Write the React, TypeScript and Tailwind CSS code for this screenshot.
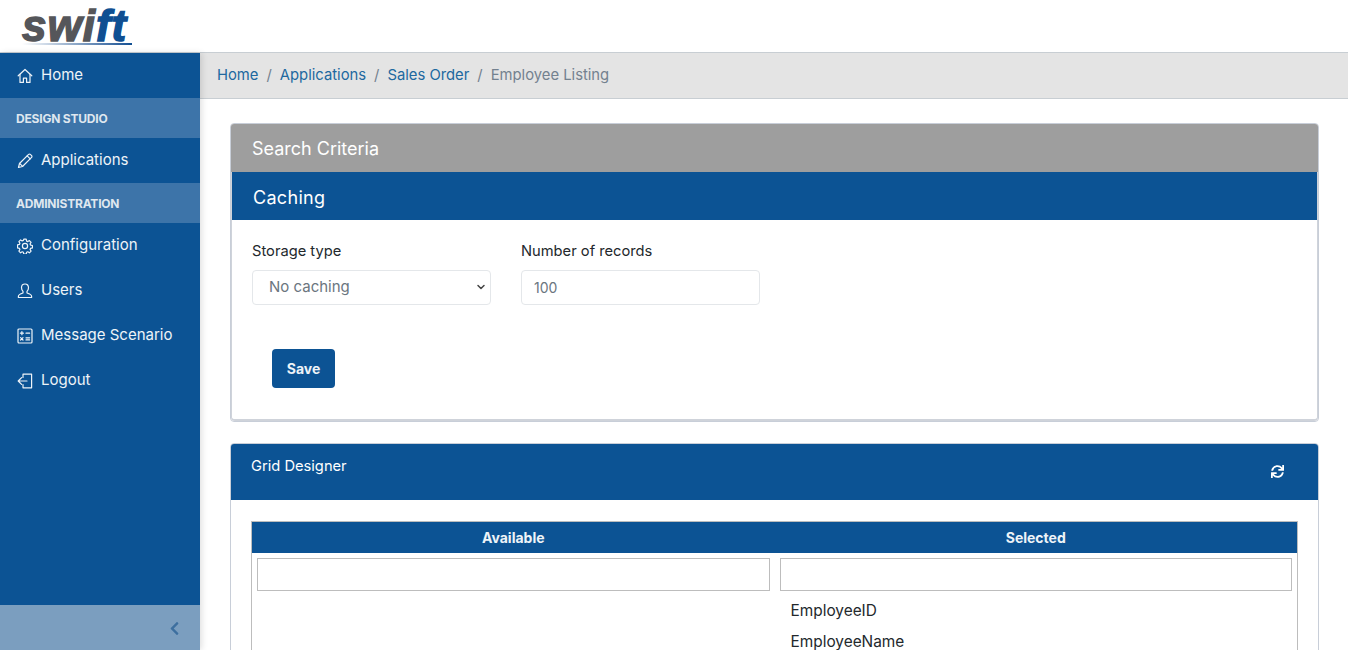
import { ChevronDown } from 'lucide-react';
import { FaChevronLeft, FaSync } from 'react-icons/fa';
import type { ReactNode } from 'react';

const FONT = "font-['Inter','Open_Sans',sans-serif]";

// ============================================================
// Sidebar icons
// ============================================================
function Icon({ children }: { children: ReactNode }) {
  return (
    <svg viewBox="0 0 16 16" fill="none" stroke="currentColor" strokeWidth="1.2" strokeLinecap="round" strokeLinejoin="round" className="h-4 w-4 shrink-0">
      {children}
    </svg>
  );
}

const HomeIcon = () => (
  <Icon>
    <path d="M1.2 7.8 8 1.5l6.8 6.3" />
    <path d="M3 6.4v8h3.4v-4.2h3.2v4.2H13v-8" />
  </Icon>
);
const PencilIcon = () => (
  <Icon>
    <path d="M1.5 14.5l1-4L11.6 1.4a1.2 1.2 0 0 1 1.7 0l1.3 1.3a1.2 1.2 0 0 1 0 1.7L5.5 13.5z" />
    <path d="M10.2 2.8l3 3M2.6 10.4l3 3" />
  </Icon>
);
const GearIcon = () => (
  <Icon>
    <path d="M6.8 1.2h2.4l.4 1.9 1.2.5 1.6-1 1.7 1.7-1 1.6.5 1.2 1.9.4v2.4l-1.9.4-.5 1.2 1 1.6-1.7 1.7-1.6-1-1.2.5-.4 1.9H6.8l-.4-1.9-1.2-.5-1.6 1-1.7-1.7 1-1.6-.5-1.2-1.9-.4V6.8l1.9-.4.5-1.2-1-1.6 1.7-1.7 1.6 1 1.2-.5z" />
    <circle cx="8" cy="8" r="2.6" />
  </Icon>
);
const UserIcon = () => (
  <Icon>
    <path d="M8 1c-2.2 0-3.5 1.6-3.5 3.8 0 1.6.7 2.8 1.5 3.6v1.6c-1.8.6-4.6 1.6-4.6 3.2v1.3h13.2v-1.3c0-1.6-2.8-2.6-4.6-3.2V8.4c.8-.8 1.5-2 1.5-3.6C11.5 2.6 10.2 1 8 1z" />
  </Icon>
);
const ScenarioIcon = () => (
  <Icon>
    <rect x="1" y="1" width="14" height="14" rx="1" />
    <path d="M3.4 5.2h3M4.9 3.7v3M9 5.2h3.6M3.6 9.6l2.4 2.4M6 9.6 3.6 12M9 9.8h3.6M9 11.9h3.6" />
  </Icon>
);
const LogoutIcon = () => (
  <Icon>
    <path d="M6 4.4V1.2h8.6v13.6H6v-3.2" />
    <path d="M10 8H1.4M4.6 4.6 1.2 8l3.4 3.4" />
  </Icon>
);

// ============================================================
// Sidebar
// ============================================================
const NAV: ({ label: string; icon: ReactNode } | { section: string })[] = [
  { label: 'Home', icon: <HomeIcon /> },
  { section: 'DESIGN STUDIO' },
  { label: 'Applications', icon: <PencilIcon /> },
  { section: 'ADMINISTRATION' },
  { label: 'Configuration', icon: <GearIcon /> },
  { label: 'Users', icon: <UserIcon /> },
  { label: 'Message Scenario', icon: <ScenarioIcon /> },
  { label: 'Logout', icon: <LogoutIcon /> },
];

function Sidebar() {
  return (
    <aside className="z-10 flex w-[200px] shrink-0 flex-col bg-[#0c5394] shadow-[2px_0_6px_rgba(0,0,0,0.12)]">
      <nav className="flex-1">
        {NAV.map((item) =>
          'section' in item ? (
            <div key={item.section} className="flex h-10 items-center bg-[#3d74a9] pl-4 pt-px text-[12px] font-bold tracking-[-0.2px] text-[#dfe7ef]">
              {item.section}
            </div>
          ) : (
            <a key={item.label} href="#" className="flex h-[45px] items-center gap-2 pl-[17px] text-[15px] text-[#eef3f8]">
              {item.icon}
              <span>{item.label}</span>
            </a>
          ),
        )}
      </nav>
      <div className="flex h-[45px] items-center justify-end bg-[#7b9ebf] pr-[18px] pt-[2px] text-[#3d6f9f]">
        <FaChevronLeft className="h-[15px] w-[15px]" />
      </div>
    </aside>
  );
}

// ============================================================
// Cards
// ============================================================
function CachingCard() {
  return (
    <section className="rounded border border-[#c8ced8]">
      <div className="flex h-12 items-center rounded-t-[3px] bg-[#9e9e9e] pl-[21px] text-[18px] text-white">
        Search Criteria
      </div>
      <div className="rounded-b border-x border-b-2 border-[#cfd3da] bg-white">
        <div className="flex h-[48px] items-center bg-[#0c5394] pl-[21px] pt-[2px] text-[18px] tracking-[0.3px] text-white">
          Caching
        </div>
        <div className="flex gap-[30px] pl-5 pt-5">
          <label className="flex w-[239px] flex-col gap-2 text-[14.7px] text-[#23282c]">
            Storage type
            <span className="relative block">
              <select className="h-[35px] w-full appearance-none rounded border border-[#e4e7ea] bg-white pl-4 text-[15px] text-[#6b7680]">
                <option>No caching</option>
              </select>
              <ChevronDown strokeWidth={3} className="absolute right-[4px] top-[11px] h-3 w-3 text-[#444]" />
            </span>
          </label>
          <label className="flex w-[239px] flex-col gap-2 text-[14.7px] text-[#23282c]">
            Number of records
            <input defaultValue="100" className="h-[35px] w-full rounded border border-[#e4e7ea] bg-white pl-3 text-[14px] text-[#6b7680]" />
          </label>
        </div>
        <div className="px-10 pb-[31px] pt-11">
          <button type="button" className="h-[39px] w-[63px] rounded bg-[#0c5394] text-[14px] font-bold text-[#eef3f8]">
            Save
          </button>
        </div>
      </div>
    </section>
  );
}

function GridDesigner() {
  return (
    <section className="mt-[21px] rounded-t border border-[#c8ced8] bg-white">
      <div className="flex h-14 items-start justify-between rounded-t-[3px] bg-[#0c5394] pl-5 pr-[34px] pt-[11px] text-[14.7px] text-white">
        <span>Grid Designer</span>
        <FaSync className="mt-[10px] h-[13px] w-[13px]" />
      </div>
      <div className="px-5 pt-[21px]">
        <div className="border border-[#bdbdbd]">
          <div className="grid h-[31px] grid-cols-2 items-center bg-[#0c5394] text-center text-[14px] font-bold text-[#eef3f8]">
            <span>Available</span>
            <span>Selected</span>
          </div>
          <div className="grid grid-cols-2 gap-x-[10px] gap-y-1 px-[5px] pt-[5px]">
            <input className="h-[33px] w-full border border-[#bdbdbd] bg-white" />
            <input className="h-[33px] w-full border border-[#bdbdbd] bg-white" />
            <div />
            <ul className="text-[15.4px] text-[#23282c]">
              <li className="flex h-[31px] items-center pl-[11px]">EmployeeID</li>
              <li className="flex h-[31px] items-center pl-[11px]">EmployeeName</li>
            </ul>
          </div>
        </div>
      </div>
    </section>
  );
}

// ============================================================
// Page
// ============================================================
export default function App() {
  return (
    <div className={`flex h-[650px] w-full flex-col overflow-hidden bg-white ${FONT}`}>
      <header className="flex h-[53px] shrink-0 items-start border-b border-[#c8ced3] bg-white pl-[22px]">
        <div className="relative h-[51px] w-[112px]">
          <div className="font-['Liberation_Sans',sans-serif] text-[44px] font-bold italic leading-[51px] tracking-[1px] [-webkit-text-stroke:1.4px_currentColor]">
            <span className="text-[#55565a]">swi</span>
            <span className="text-[#0f4f92]">ft</span>
          </div>
          <div className="absolute left-0 top-[43px] h-[2px] w-[110px] bg-gradient-to-r from-transparent via-[#8aa5c6] to-[#0f4f92]" />
        </div>
      </header>
      <div className="flex min-h-0 flex-1">
        <Sidebar />
        <main className="min-w-0 flex-1 overflow-hidden">
          <div className="flex h-[46px] items-center gap-2 border-b border-[#c8ced3] bg-[#e4e4e4] pl-[17px] text-[14.8px]">
            <a href="#" className="text-[#20689f]">Home</a>
            <span className="text-[#73818f]">/</span>
            <a href="#" className="text-[#20689f]">Applications</a>
            <span className="text-[#73818f]">/</span>
            <a href="#" className="text-[#20689f]">Sales Order</a>
            <span className="text-[#73818f]">/</span>
            <span className="text-[#73818f]">Employee Listing</span>
          </div>
          <div className="pl-[30px] pr-[29px] pt-6">
            <CachingCard />
            <GridDesigner />
          </div>
        </main>
      </div>
    </div>
  );
}
